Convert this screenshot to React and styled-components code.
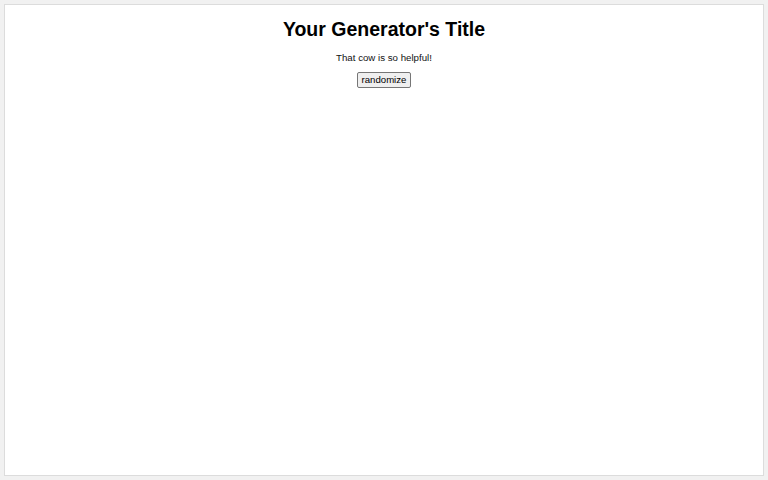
import React from "react";
import styled, { createGlobalStyle } from "styled-components";

const Global = createGlobalStyle`
  html, body { margin: 0; padding: 0; height: 100%; }
  body {
    background: #f1f1f1;
    font-family: "Liberation Sans", Arial, sans-serif;
  }
  #root { height: 100%; }
`;

const Page = styled.div`
  box-sizing: border-box;
  height: 480px;
  padding: 4px;
  display: flex;
`;

const Panel = styled.main`
  flex: 1;
  background: #ffffff;
  border: 1px solid #dcdcdc;
  display: flex;
  flex-direction: column;
  align-items: center;
  padding-top: 13px;
`;

const Title = styled.h1`
  margin: 0;
  font-size: 19.5px;
  font-weight: bold;
  color: #000;
  line-height: 23px;
`;

const Output = styled.p`
  margin: 11px 0 0;
  font-size: 9.7px;
  line-height: 12px;
  color: #111;
`;

const Button = styled.button`
  margin-top: 8px;
  font-family: "Liberation Sans", Arial, sans-serif;
  font-size: 9.6px;
  line-height: 12px;
  padding: 1px 4px;
  color: #000;
  background: #efefef;
  border: 1px solid #767676;
  border-radius: 2px;
`;

export default function App() {
  return (
    <>
      <Global />
      <Page>
        <Panel>
          <Title>Your Generator's Title</Title>
          <Output>That cow is so helpful!</Output>
          <Button>randomize</Button>
        </Panel>
      </Page>
    </>
  );
}
